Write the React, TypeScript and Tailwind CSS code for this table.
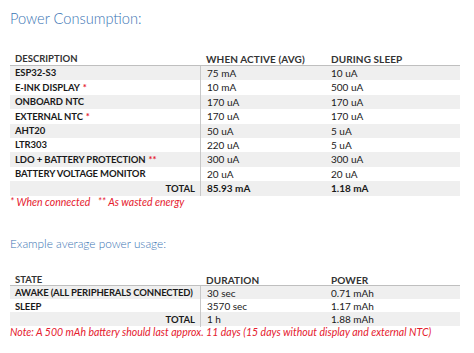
import React from "react";

const rows = [
  { name: "ESP32-S3", mark: "", active: "75 mA", sleep: "10 uA" },
  { name: "E-INK DISPLAY", mark: "*", active: "10 mA", sleep: "500 uA" },
  { name: "ONBOARD NTC", mark: "", active: "170 uA", sleep: "170 uA" },
  { name: "EXTERNAL NTC", mark: "*", active: "170 uA", sleep: "170 uA" },
  { name: "AHT20", mark: "", active: "50 uA", sleep: "5 uA" },
  { name: "LTR303", mark: "", active: "220 uA", sleep: "5 uA" },
  { name: "LDO + BATTERY PROTECTION", mark: "**", active: "300 uA", sleep: "300 uA" },
  { name: "BATTERY VOLTAGE MONITOR", mark: "", active: "20 uA", sleep: "20 uA" },
];

const usage = [
  { state: "AWAKE (ALL PERIPHERALS CONNECTED)", duration: "30 sec", power: "0.71 mAh" },
  { state: "SLEEP", duration: "3570 sec", power: "1.17 mAh" },
];

const cols = "grid grid-cols-[190px_125px_135px]";

const App = () => {
  return (
    <div
      className="w-[474px] h-[353px] bg-white pl-[10px] text-[#1a1a1a] overflow-hidden"
      style={{ fontFamily: "Lato, 'Liberation Sans', sans-serif" }}
    >
      {/* Power consumption */}
      <h1 className="pt-[8px] text-[14.6px] leading-[22px] font-light text-[#3a74b3]">Power Consumption:</h1>

      <div className="mt-[22px] w-[450px] text-[10px] whitespace-nowrap">
        <div className={`${cols} h-[14px] items-center border-b border-[#bfbfbf] font-bold text-[#333]`}>
          <div className="pl-[5px] text-[9.5px]">DESCRIPTION</div>
          <div className="pl-[6px] tracking-[0.1px]">WHEN ACTIVE (AVG)</div>
          <div className="pl-[6px] tracking-[0.1px]">DURING SLEEP</div>
        </div>
        {rows.map((r, i) => (
          <div key={r.name} className={`${cols} h-[14.4px] items-center ${i % 2 === 0 ? "bg-[#efefef]" : "bg-white"}`}>
            <div className="pl-[5px] font-bold text-[9.5px] tracking-[-0.1px]">
              {r.name}
              {r.mark && <span className="ml-[3px] text-[#e5202e]">{r.mark}</span>}
            </div>
            <div className="pl-[6px] h-full flex items-center border-l border-[#c8c8c8]">{r.active}</div>
            <div className="pl-[6px]">{r.sleep}</div>
          </div>
        ))}
        <div className={`${cols} h-[14.4px] items-center bg-[#efefef] font-bold`}>
          <div className="pr-[5px] text-right text-[9.5px]">TOTAL</div>
          <div className="pl-[6px] h-full flex items-center border-l border-[#c8c8c8]">85.93 mA</div>
          <div className="pl-[6px]">1.18 mA</div>
        </div>
      </div>
      <p className="text-[10.5px] leading-[12px] italic text-[#e5202e] whitespace-pre">
        {"* When connected   ** As wasted energy"}
      </p>

      {/* Example usage */}
      <h2 className="mt-[27px] text-[11.8px] leading-[18px] font-light text-[#3a74b3]">Example average power usage:</h2>

      <div className="mt-[20px] w-[450px] text-[10px] whitespace-nowrap">
        <div className={`${cols} h-[13.5px] items-center border-b border-[#bfbfbf] font-bold text-[#333]`}>
          <div className="pl-[5px] text-[9.5px]">STATE</div>
          <div className="pl-[6px] tracking-[0.1px]">DURATION</div>
          <div className="pl-[6px] tracking-[0.1px]">POWER</div>
        </div>
        {usage.map((u, i) => (
          <div key={u.state} className={`${cols} h-[13.2px] items-center ${i % 2 === 0 ? "bg-[#efefef]" : "bg-white"}`}>
            <div className="pl-[5px] font-bold text-[9.5px] tracking-[-0.15px]">{u.state}</div>
            <div className="pl-[6px] h-full flex items-center border-l border-[#c8c8c8]">{u.duration}</div>
            <div className="pl-[6px]">{u.power}</div>
          </div>
        ))}
        <div className={`${cols} h-[13.2px] items-center bg-[#efefef]`}>
          <div className="pr-[5px] text-right font-bold text-[9.5px]">TOTAL</div>
          <div className="pl-[6px] h-full flex items-center border-l border-[#c8c8c8]">1 h</div>
          <div className="pl-[6px]">1.88 mAh</div>
        </div>
      </div>
      <p className="text-[10.5px] leading-[12px] italic text-[#e5202e] whitespace-nowrap">
        Note: A 500 mAh battery should last approx. 11 days (15 days without display and external NTC)
      </p>
    </div>
  );
};

export default App;
